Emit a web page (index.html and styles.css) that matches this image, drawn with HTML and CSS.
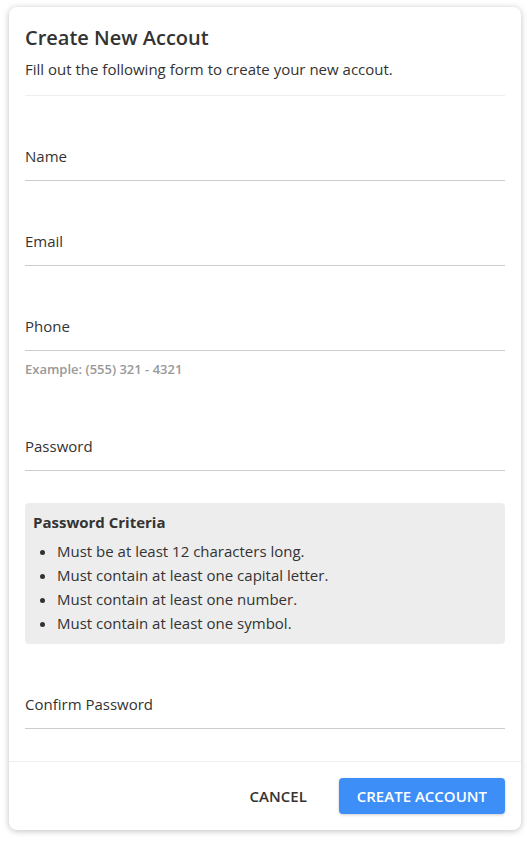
FILE: index.html
```html
<!DOCTYPE html>
<html lang="en">
<head>
<meta charset="UTF-8">
<meta name="viewport" content="width=device-width, initial-scale=1.0">
<title>Create New Accout</title>
<link rel="stylesheet" href="styles.css">
</head>
<body>

<div class="card">
    <div class="card-header">
        <h1>Create New Accout</h1>
        <p class="subtitle">Fill out the following form to create your new accout.</p>
    </div>

    <form id="accountForm" class="card-body">
        <div class="field">
            <input type="text" id="name" name="name" placeholder="Name">
        </div>
        <div class="field">
            <input type="email" id="email" name="email" placeholder="Email">
        </div>
        <div class="field">
            <input type="tel" id="phone" name="phone" placeholder="Phone">
            <span class="hint">Example: (555) 321 - 4321</span>
        </div>
        <div class="field">
            <input type="password" id="password" name="password" placeholder="Password">
        </div>

        <div class="criteria">
            <strong>Password Criteria</strong>
            <ul>
                <li>Must be at least 12 characters long.</li>
                <li>Must contain at least one capital letter.</li>
                <li>Must contain at least one number.</li>
                <li>Must contain at least one symbol.</li>
            </ul>
        </div>

        <div class="field">
            <input type="password" id="confirmPassword" name="confirmPassword" placeholder="Confirm Password">
        </div>
    </form>

    <div class="card-footer">
        <button type="button" class="btn-text">Cancel</button>
        <button type="submit" form="accountForm" class="btn-primary">Create Account</button>
    </div>
</div>

</body>
</html>
```

FILE: styles.css
```css
body {
    font-family: "Open Sans", Arial, sans-serif;
    font-size: 15px;
    color: #333;
    background-color: #fff;
    margin: 0;
    padding: 7px 9px;
}
.card {
    background-color: #fff;
    border-radius: 8px;
    box-shadow: 0 1px 6px rgba(0, 0, 0, 0.25);
}
.card-header {
    margin: 0 16px;
    padding: 16px 0 14px;
    border-bottom: 1px solid #eee;
}
h1 {
    font-size: 20px;
    font-weight: 600;
    line-height: 30px;
    margin: 0 0 4px;
}
.subtitle {
    margin: 0;
    line-height: 24px;
}
.card-body {
    padding: 0 16px 32px;
}
.field {
    padding-top: 36px;
}
input[type="text"], input[type="email"], input[type="tel"], input[type="password"] {
    display: block;
    width: 100%;
    box-sizing: border-box;
    font: inherit;
    line-height: 24px;
    color: #333;
    padding: 12px 0;
    border: none;
    border-bottom: 1px solid #ccc;
    outline: none;
    background: transparent;
}
input::placeholder {
    color: #333;
    opacity: 1;
}
.hint {
    display: block;
    margin: 9px 0 8px;
    font-size: 13px;
    line-height: 18px;
    font-weight: 600;
    color: #999;
}
.criteria {
    margin-top: 32px;
    background-color: #ededed;
    border-radius: 4px;
    padding: 9px 8px 9px;
}
.criteria ul {
    margin: 7px 0 0;
    padding-left: 24px;
}
.criteria li {
    line-height: 24px;
}
.card-footer {
    display: flex;
    justify-content: flex-end;
    gap: 14px;
    padding: 16px;
    border-top: 1px solid #eee;
}
button {
    font: inherit;
    font-weight: 600;
    text-transform: uppercase;
    height: 36px;
    padding: 0 18px;
    border: none;
    border-radius: 4px;
    cursor: pointer;
}
.btn-text {
    background: transparent;
    color: #333;
}
.btn-primary {
    background-color: #3d8ef7;
    color: #fff;
    box-shadow: 0 1px 3px rgba(0, 0, 0, 0.2);
}
```
